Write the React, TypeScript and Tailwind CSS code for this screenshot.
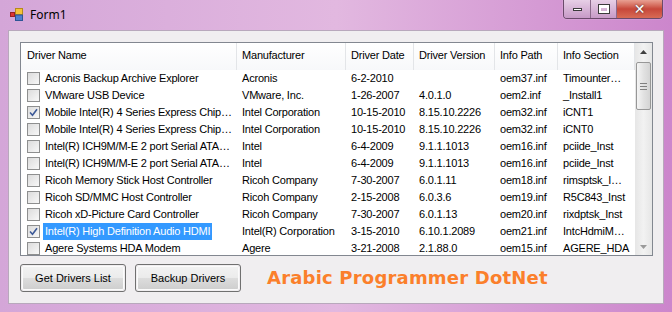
import React from "react";

type Row = {
  name: string;
  mfr: string;
  date: string;
  ver: string;
  path: string;
  sec: string;
  checked?: boolean;
  selected?: boolean;
};

const rows: Row[] = [
  { name: "Acronis Backup Archive Explorer", mfr: "Acronis", date: "6-2-2010", ver: "", path: "oem37.inf", sec: "Timounter…" },
  { name: "VMware USB Device", mfr: "VMware, Inc.", date: "1-26-2007", ver: "4.0.1.0", path: "oem2.inf", sec: "_Install1" },
  { name: "Mobile Intel(R) 4 Series Express Chip…", mfr: "Intel Corporation", date: "10-15-2010", ver: "8.15.10.2226", path: "oem32.inf", sec: "iCNT1", checked: true },
  { name: "Mobile Intel(R) 4 Series Express Chip…", mfr: "Intel Corporation", date: "10-15-2010", ver: "8.15.10.2226", path: "oem32.inf", sec: "iCNT0" },
  { name: "Intel(R) ICH9M/M-E 2 port Serial ATA…", mfr: "Intel", date: "6-4-2009", ver: "9.1.1.1013", path: "oem16.inf", sec: "pciide_Inst" },
  { name: "Intel(R) ICH9M/M-E 2 port Serial ATA…", mfr: "Intel", date: "6-4-2009", ver: "9.1.1.1013", path: "oem16.inf", sec: "pciide_Inst" },
  { name: "Ricoh Memory Stick Host Controller", mfr: "Ricoh Company", date: "7-30-2007", ver: "6.0.1.11", path: "oem18.inf", sec: "rimsptsk_I…" },
  { name: "Ricoh SD/MMC Host Controller", mfr: "Ricoh Company", date: "2-15-2008", ver: "6.0.3.6", path: "oem19.inf", sec: "R5C843_Inst" },
  { name: "Ricoh xD-Picture Card Controller", mfr: "Ricoh Company", date: "7-30-2007", ver: "6.0.1.13", path: "oem20.inf", sec: "rixdptsk_Inst" },
  { name: "Intel(R) High Definition Audio HDMI", mfr: "Intel(R) Corporation", date: "3-15-2010", ver: "6.10.1.2089", path: "oem21.inf", sec: "IntcHdmiM…", checked: true, selected: true },
  { name: "Agere Systems HDA Modem", mfr: "Agere", date: "3-21-2008", ver: "2.1.88.0", path: "oem15.inf", sec: "AGERE_HDA" },
];

function CheckBox({ checked }: { checked?: boolean }) {
  return (
    <div className="w-[13px] h-[13px] border border-[#8e8f8f] bg-gradient-to-br from-[#dcdcdc] to-[#f8f8f8] flex items-center justify-center shrink-0">
      {checked && (
        <svg width="9" height="9" viewBox="0 0 9 9">
          <path d="M1 4.5 L3.5 7.2 L8 1.2" fill="none" stroke="#3d5a98" strokeWidth="1.6" />
        </svg>
      )}
    </div>
  );
}

function Button({ label }: { label: string }) {
  return (
    <div className="w-[106px] h-[28px] rounded-[3px] border border-[#707070] p-px">
      <div className="w-full h-full rounded-[2px] border border-[#fbfbfb] flex flex-col overflow-hidden">
        <div className="flex-1 bg-gradient-to-b from-[#f2f2f2] to-[#ebebeb]" />
        <div className="flex-1 bg-gradient-to-b from-[#dddddd] to-[#cfcfcf]" />
      </div>
      <div className="relative -mt-[24px] h-[24px] flex items-center justify-center text-[11px] text-black">{label}</div>
    </div>
  );
}

export default function App() {
  const cols = "grid grid-cols-[216px_109px_68px_81px_63px_77px]";
  return (
    <div
      className="w-[672px] h-[312px] bg-gradient-to-r from-[#d4a6d8] via-[#e2b8e0] to-[#cc86cc] flex flex-col overflow-hidden"
      style={{ fontFamily: "'Liberation Sans', Arial, sans-serif" }}
    >
      {/* Title bar */}
      <div className="h-[30px] flex items-start shrink-0">
        <div className="flex items-center pl-[10px] pt-[8px] gap-[6px]">
          <svg width="14" height="13" viewBox="0 0 14 13">
            <rect x="0.5" y="4.5" width="4" height="4" fill="#d33" stroke="#922" />
            <rect x="5.5" y="0.5" width="7" height="6" fill="#f5c23a" stroke="#b58a1a" />
            <rect x="5.5" y="7" width="7" height="5.5" fill="#4f7fd0" stroke="#2c5596" />
          </svg>
          <span className="text-[12px] text-black leading-none" style={{ fontFamily: "'Noto Sans', 'Open Sans', sans-serif" }}>Form1</span>
        </div>
        <div className="ml-auto mr-[9px] flex h-[19px] rounded-b-[4px] border border-t-0 border-[#6b4a6b] overflow-hidden shadow-[0_0_1px_#fff]">
          <div className="w-[27px] h-full bg-gradient-to-b from-[#e7cfe6] to-[#c79ac7] border-r border-[#8b6a8b] flex items-center justify-center">
            <div className="w-[9px] h-[3px] bg-white border border-[#3b3b3b]" />
          </div>
          <div className="w-[26px] h-full bg-gradient-to-b from-[#e7cfe6] to-[#c79ac7] border-r border-[#8b6a8b] flex items-center justify-center">
            <div className="w-[10px] h-[8px] border-2 border-t-[3px] border-white outline outline-1 outline-[#3b3b3b]" />
          </div>
          <div className="w-[45px] h-full bg-gradient-to-b from-[#e8a093] via-[#c7473a] to-[#d86b55] flex items-center justify-center">
            <span className="text-white font-bold text-[14px] leading-none" style={{ fontFamily: "'DejaVu Sans', sans-serif", textShadow: "0 0 2px #333" }}>✕</span>
          </div>
        </div>
      </div>

      {/* Client area */}
      <div className="ml-[8px] w-[656px] h-[274px] bg-[#f0eef0] border border-[#b8a8bc] p-[11px] flex flex-col">
        {/* ListView */}
        <div className="w-[633px] h-[217px] border border-[#828790] bg-white flex overflow-hidden">
          <div className="w-[614px] flex flex-col overflow-hidden tracking-[-0.2px]">
            {/* Header */}
            <div className={`${cols} h-[27px] shrink-0 bg-gradient-to-b from-white to-[#f7f8fa] text-[11px] text-black`}>
              {["Driver Name", "Manufacturer", "Driver Date", "Driver Version", "Info Path", "Info Section"].map((h, i) => (
                <div key={h} className={`flex items-center pb-[2px] ${i === 0 ? "pl-[6px]" : "pl-[5px]"} border-r border-[#e3e5e8]`}>
                  {h}
                </div>
              ))}
            </div>
            {rows.map((r, idx) => (
              <div key={idx} className={`${cols} h-[17px] shrink-0 text-[11px] text-black leading-[17px]`}>
                <div className="flex items-center pl-[6px] overflow-hidden whitespace-nowrap">
                  <CheckBox checked={r.checked} />
                  <span className={`ml-[3px] px-[2px] ${r.selected ? "bg-[#3399ff] text-white" : ""}`}>{r.name}</span>
                </div>
                <div className="pl-[5px] whitespace-nowrap overflow-hidden">{r.mfr}</div>
                <div className="pl-[5px] whitespace-nowrap overflow-hidden">{r.date}</div>
                <div className="pl-[5px] whitespace-nowrap overflow-hidden">{r.ver}</div>
                <div className="pl-[5px] whitespace-nowrap overflow-hidden">{r.path}</div>
                <div className="pl-[5px] whitespace-nowrap overflow-hidden">{r.sec}</div>
              </div>
            ))}
            <div className={`${cols} h-[17px] shrink-0`}>
              <div className="flex items-center pl-[6px]">
                <CheckBox />
              </div>
            </div>
          </div>
          {/* Scrollbar */}
          <div className="w-[17px] h-full bg-gradient-to-r from-[#e6e6e6] via-[#f2f2f2] to-[#e6e6e6] flex flex-col">
            <div className="h-[17px] flex items-center justify-center shrink-0">
              <svg width="7" height="4" viewBox="0 0 7 4"><path d="M0 4 L3.5 0 L7 4 Z" fill="#404040" /></svg>
            </div>
            <div className="mx-[1px] mt-[2px] h-[48px] rounded-[2px] border border-[#979797] bg-gradient-to-r from-[#f5f5f5] via-[#e2e2e2] to-[#d4d4d4] flex flex-col items-center justify-center gap-[2px] shrink-0">
              <div className="w-[7px] h-px bg-[#808080]" />
              <div className="w-[7px] h-px bg-[#808080]" />
              <div className="w-[7px] h-px bg-[#808080]" />
            </div>
            <div className="flex-1" />
            <div className="h-[17px] flex items-center justify-center shrink-0">
              <svg width="7" height="4" viewBox="0 0 7 4"><path d="M0 0 L3.5 4 L7 0 Z" fill="#9a9a9a" /></svg>
            </div>
          </div>
        </div>

        {/* Bottom row */}
        <div className="mt-[8px] flex items-center">
          <Button label="Get Drivers List" />
          <div className="ml-[9px]">
            <Button label="Backup Drivers" />
          </div>
          <div
            className="ml-[26px] text-[18px] font-bold text-[#fb7f2b] leading-none"
            style={{ fontFamily: "'DejaVu Sans', sans-serif", letterSpacing: "0.2px" }}
          >
            Arabic Programmer DotNet
          </div>
        </div>
      </div>
    </div>
  );
}
